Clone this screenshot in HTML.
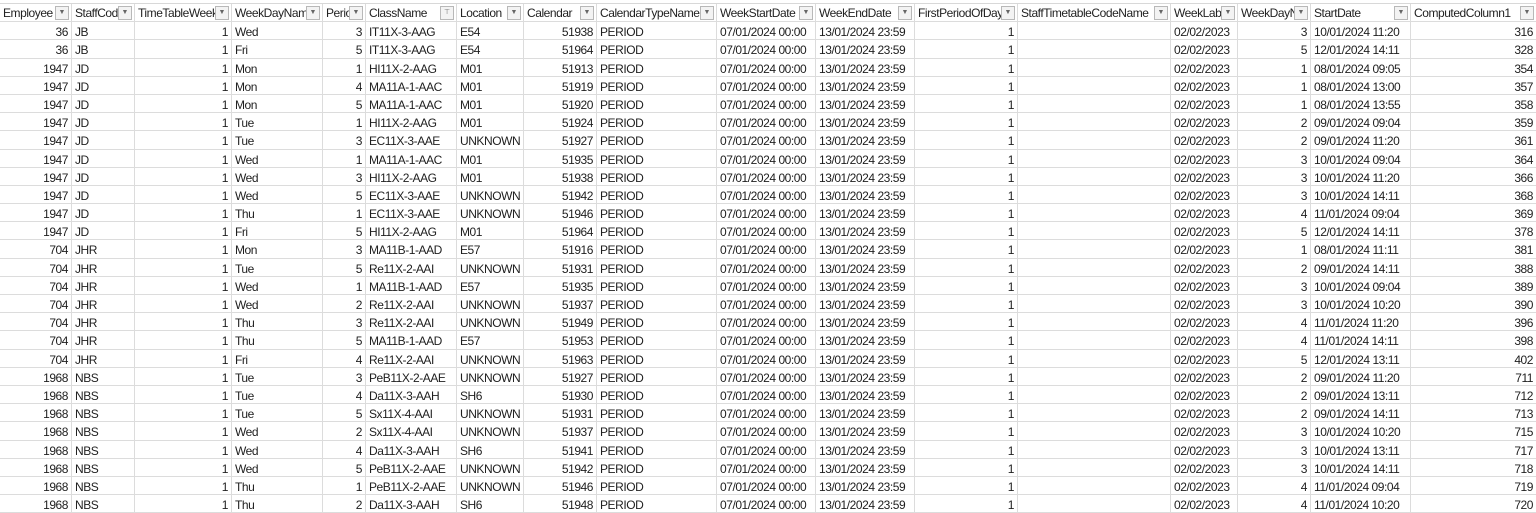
<!DOCTYPE html>
<html><head><meta charset="utf-8"><style>
body{margin:0;width:1536px;height:508px;overflow:hidden;background:#fff;font-family:"Liberation Sans",sans-serif;font-size:12px;letter-spacing:-0.45px;color:#1e1e1e}
#g{position:absolute;left:0;top:3px;border-top:1px solid #d8d8d8}
.r{display:flex;height:18.2px;box-sizing:border-box;border-bottom:1px solid #dcdcdc}
.r span{box-sizing:border-box;border-right:1px solid #dcdcdc;padding:0 3px;line-height:17px;padding-top:2px;white-space:nowrap;overflow:hidden;flex:none}
.h span{position:relative;padding-right:17px;color:#222;padding-top:1px}
.h span i{position:absolute;right:2px;top:2px;width:12px;height:12px;border:1px solid #b8b8b8;background:#f3f3f3;font-style:normal;font-size:7px;line-height:12px;text-align:center;color:#666;letter-spacing:0}
.r span:nth-child(1){width:72px;text-align:right}
.r span:nth-child(2){width:63px}
.r span:nth-child(3){width:97px;text-align:right}
.r span:nth-child(4){width:91px}
.r span:nth-child(5){width:43px;text-align:right}
.r span:nth-child(6){width:91px}
.r span:nth-child(7){width:67px}
.r span:nth-child(8){width:73px;text-align:right}
.r span:nth-child(9){width:120px}
.r span:nth-child(10){width:99px}
.r span:nth-child(11){width:99px}
.r span:nth-child(12){width:103px;text-align:right}
.r span:nth-child(13){width:153px}
.r span:nth-child(14){width:67px}
.r span:nth-child(15){width:73px;text-align:right}
.r span:nth-child(16){width:100px}
.r span:nth-child(17){width:125px;text-align:right;border-right:none}
.h span{text-align:left!important}
</style></head><body><div id="g">
<div class="r h"><span>Employee<i>▼</i></span><span>StaffCode<i>▼</i></span><span>TimeTableWeek<i>▼</i></span><span>WeekDayName<i>▼</i></span><span>Period<i>▼</i></span><span>ClassName<i>⊤</i></span><span>Location<i>▼</i></span><span>Calendar<i>▼</i></span><span>CalendarTypeName<i>▼</i></span><span>WeekStartDate<i>▼</i></span><span>WeekEndDate<i>▼</i></span><span>FirstPeriodOfDay<i>▼</i></span><span>StaffTimetableCodeName<i>▼</i></span><span>WeekLabel<i>▼</i></span><span>WeekDayNo<i>▼</i></span><span>StartDate<i>▼</i></span><span>ComputedColumn1<i>▼</i></span></div>
<div class="r"><span>36</span><span>JB</span><span>1</span><span>Wed</span><span>3</span><span>IT11X-3-AAG</span><span>E54</span><span>51938</span><span>PERIOD</span><span>07/01/2024 00:00</span><span>13/01/2024 23:59</span><span>1</span><span></span><span>02/02/2023</span><span>3</span><span>10/01/2024 11:20</span><span>316</span></div>
<div class="r"><span>36</span><span>JB</span><span>1</span><span>Fri</span><span>5</span><span>IT11X-3-AAG</span><span>E54</span><span>51964</span><span>PERIOD</span><span>07/01/2024 00:00</span><span>13/01/2024 23:59</span><span>1</span><span></span><span>02/02/2023</span><span>5</span><span>12/01/2024 14:11</span><span>328</span></div>
<div class="r"><span>1947</span><span>JD</span><span>1</span><span>Mon</span><span>1</span><span>HI11X-2-AAG</span><span>M01</span><span>51913</span><span>PERIOD</span><span>07/01/2024 00:00</span><span>13/01/2024 23:59</span><span>1</span><span></span><span>02/02/2023</span><span>1</span><span>08/01/2024 09:05</span><span>354</span></div>
<div class="r"><span>1947</span><span>JD</span><span>1</span><span>Mon</span><span>4</span><span>MA11A-1-AAC</span><span>M01</span><span>51919</span><span>PERIOD</span><span>07/01/2024 00:00</span><span>13/01/2024 23:59</span><span>1</span><span></span><span>02/02/2023</span><span>1</span><span>08/01/2024 13:00</span><span>357</span></div>
<div class="r"><span>1947</span><span>JD</span><span>1</span><span>Mon</span><span>5</span><span>MA11A-1-AAC</span><span>M01</span><span>51920</span><span>PERIOD</span><span>07/01/2024 00:00</span><span>13/01/2024 23:59</span><span>1</span><span></span><span>02/02/2023</span><span>1</span><span>08/01/2024 13:55</span><span>358</span></div>
<div class="r"><span>1947</span><span>JD</span><span>1</span><span>Tue</span><span>1</span><span>HI11X-2-AAG</span><span>M01</span><span>51924</span><span>PERIOD</span><span>07/01/2024 00:00</span><span>13/01/2024 23:59</span><span>1</span><span></span><span>02/02/2023</span><span>2</span><span>09/01/2024 09:04</span><span>359</span></div>
<div class="r"><span>1947</span><span>JD</span><span>1</span><span>Tue</span><span>3</span><span>EC11X-3-AAE</span><span>UNKNOWN</span><span>51927</span><span>PERIOD</span><span>07/01/2024 00:00</span><span>13/01/2024 23:59</span><span>1</span><span></span><span>02/02/2023</span><span>2</span><span>09/01/2024 11:20</span><span>361</span></div>
<div class="r"><span>1947</span><span>JD</span><span>1</span><span>Wed</span><span>1</span><span>MA11A-1-AAC</span><span>M01</span><span>51935</span><span>PERIOD</span><span>07/01/2024 00:00</span><span>13/01/2024 23:59</span><span>1</span><span></span><span>02/02/2023</span><span>3</span><span>10/01/2024 09:04</span><span>364</span></div>
<div class="r"><span>1947</span><span>JD</span><span>1</span><span>Wed</span><span>3</span><span>HI11X-2-AAG</span><span>M01</span><span>51938</span><span>PERIOD</span><span>07/01/2024 00:00</span><span>13/01/2024 23:59</span><span>1</span><span></span><span>02/02/2023</span><span>3</span><span>10/01/2024 11:20</span><span>366</span></div>
<div class="r"><span>1947</span><span>JD</span><span>1</span><span>Wed</span><span>5</span><span>EC11X-3-AAE</span><span>UNKNOWN</span><span>51942</span><span>PERIOD</span><span>07/01/2024 00:00</span><span>13/01/2024 23:59</span><span>1</span><span></span><span>02/02/2023</span><span>3</span><span>10/01/2024 14:11</span><span>368</span></div>
<div class="r"><span>1947</span><span>JD</span><span>1</span><span>Thu</span><span>1</span><span>EC11X-3-AAE</span><span>UNKNOWN</span><span>51946</span><span>PERIOD</span><span>07/01/2024 00:00</span><span>13/01/2024 23:59</span><span>1</span><span></span><span>02/02/2023</span><span>4</span><span>11/01/2024 09:04</span><span>369</span></div>
<div class="r"><span>1947</span><span>JD</span><span>1</span><span>Fri</span><span>5</span><span>HI11X-2-AAG</span><span>M01</span><span>51964</span><span>PERIOD</span><span>07/01/2024 00:00</span><span>13/01/2024 23:59</span><span>1</span><span></span><span>02/02/2023</span><span>5</span><span>12/01/2024 14:11</span><span>378</span></div>
<div class="r"><span>704</span><span>JHR</span><span>1</span><span>Mon</span><span>3</span><span>MA11B-1-AAD</span><span>E57</span><span>51916</span><span>PERIOD</span><span>07/01/2024 00:00</span><span>13/01/2024 23:59</span><span>1</span><span></span><span>02/02/2023</span><span>1</span><span>08/01/2024 11:11</span><span>381</span></div>
<div class="r"><span>704</span><span>JHR</span><span>1</span><span>Tue</span><span>5</span><span>Re11X-2-AAI</span><span>UNKNOWN</span><span>51931</span><span>PERIOD</span><span>07/01/2024 00:00</span><span>13/01/2024 23:59</span><span>1</span><span></span><span>02/02/2023</span><span>2</span><span>09/01/2024 14:11</span><span>388</span></div>
<div class="r"><span>704</span><span>JHR</span><span>1</span><span>Wed</span><span>1</span><span>MA11B-1-AAD</span><span>E57</span><span>51935</span><span>PERIOD</span><span>07/01/2024 00:00</span><span>13/01/2024 23:59</span><span>1</span><span></span><span>02/02/2023</span><span>3</span><span>10/01/2024 09:04</span><span>389</span></div>
<div class="r"><span>704</span><span>JHR</span><span>1</span><span>Wed</span><span>2</span><span>Re11X-2-AAI</span><span>UNKNOWN</span><span>51937</span><span>PERIOD</span><span>07/01/2024 00:00</span><span>13/01/2024 23:59</span><span>1</span><span></span><span>02/02/2023</span><span>3</span><span>10/01/2024 10:20</span><span>390</span></div>
<div class="r"><span>704</span><span>JHR</span><span>1</span><span>Thu</span><span>3</span><span>Re11X-2-AAI</span><span>UNKNOWN</span><span>51949</span><span>PERIOD</span><span>07/01/2024 00:00</span><span>13/01/2024 23:59</span><span>1</span><span></span><span>02/02/2023</span><span>4</span><span>11/01/2024 11:20</span><span>396</span></div>
<div class="r"><span>704</span><span>JHR</span><span>1</span><span>Thu</span><span>5</span><span>MA11B-1-AAD</span><span>E57</span><span>51953</span><span>PERIOD</span><span>07/01/2024 00:00</span><span>13/01/2024 23:59</span><span>1</span><span></span><span>02/02/2023</span><span>4</span><span>11/01/2024 14:11</span><span>398</span></div>
<div class="r"><span>704</span><span>JHR</span><span>1</span><span>Fri</span><span>4</span><span>Re11X-2-AAI</span><span>UNKNOWN</span><span>51963</span><span>PERIOD</span><span>07/01/2024 00:00</span><span>13/01/2024 23:59</span><span>1</span><span></span><span>02/02/2023</span><span>5</span><span>12/01/2024 13:11</span><span>402</span></div>
<div class="r"><span>1968</span><span>NBS</span><span>1</span><span>Tue</span><span>3</span><span>PeB11X-2-AAE</span><span>UNKNOWN</span><span>51927</span><span>PERIOD</span><span>07/01/2024 00:00</span><span>13/01/2024 23:59</span><span>1</span><span></span><span>02/02/2023</span><span>2</span><span>09/01/2024 11:20</span><span>711</span></div>
<div class="r"><span>1968</span><span>NBS</span><span>1</span><span>Tue</span><span>4</span><span>Da11X-3-AAH</span><span>SH6</span><span>51930</span><span>PERIOD</span><span>07/01/2024 00:00</span><span>13/01/2024 23:59</span><span>1</span><span></span><span>02/02/2023</span><span>2</span><span>09/01/2024 13:11</span><span>712</span></div>
<div class="r"><span>1968</span><span>NBS</span><span>1</span><span>Tue</span><span>5</span><span>Sx11X-4-AAI</span><span>UNKNOWN</span><span>51931</span><span>PERIOD</span><span>07/01/2024 00:00</span><span>13/01/2024 23:59</span><span>1</span><span></span><span>02/02/2023</span><span>2</span><span>09/01/2024 14:11</span><span>713</span></div>
<div class="r"><span>1968</span><span>NBS</span><span>1</span><span>Wed</span><span>2</span><span>Sx11X-4-AAI</span><span>UNKNOWN</span><span>51937</span><span>PERIOD</span><span>07/01/2024 00:00</span><span>13/01/2024 23:59</span><span>1</span><span></span><span>02/02/2023</span><span>3</span><span>10/01/2024 10:20</span><span>715</span></div>
<div class="r"><span>1968</span><span>NBS</span><span>1</span><span>Wed</span><span>4</span><span>Da11X-3-AAH</span><span>SH6</span><span>51941</span><span>PERIOD</span><span>07/01/2024 00:00</span><span>13/01/2024 23:59</span><span>1</span><span></span><span>02/02/2023</span><span>3</span><span>10/01/2024 13:11</span><span>717</span></div>
<div class="r"><span>1968</span><span>NBS</span><span>1</span><span>Wed</span><span>5</span><span>PeB11X-2-AAE</span><span>UNKNOWN</span><span>51942</span><span>PERIOD</span><span>07/01/2024 00:00</span><span>13/01/2024 23:59</span><span>1</span><span></span><span>02/02/2023</span><span>3</span><span>10/01/2024 14:11</span><span>718</span></div>
<div class="r"><span>1968</span><span>NBS</span><span>1</span><span>Thu</span><span>1</span><span>PeB11X-2-AAE</span><span>UNKNOWN</span><span>51946</span><span>PERIOD</span><span>07/01/2024 00:00</span><span>13/01/2024 23:59</span><span>1</span><span></span><span>02/02/2023</span><span>4</span><span>11/01/2024 09:04</span><span>719</span></div>
<div class="r"><span>1968</span><span>NBS</span><span>1</span><span>Thu</span><span>2</span><span>Da11X-3-AAH</span><span>SH6</span><span>51948</span><span>PERIOD</span><span>07/01/2024 00:00</span><span>13/01/2024 23:59</span><span>1</span><span></span><span>02/02/2023</span><span>4</span><span>11/01/2024 10:20</span><span>720</span></div>
</div></body></html>
